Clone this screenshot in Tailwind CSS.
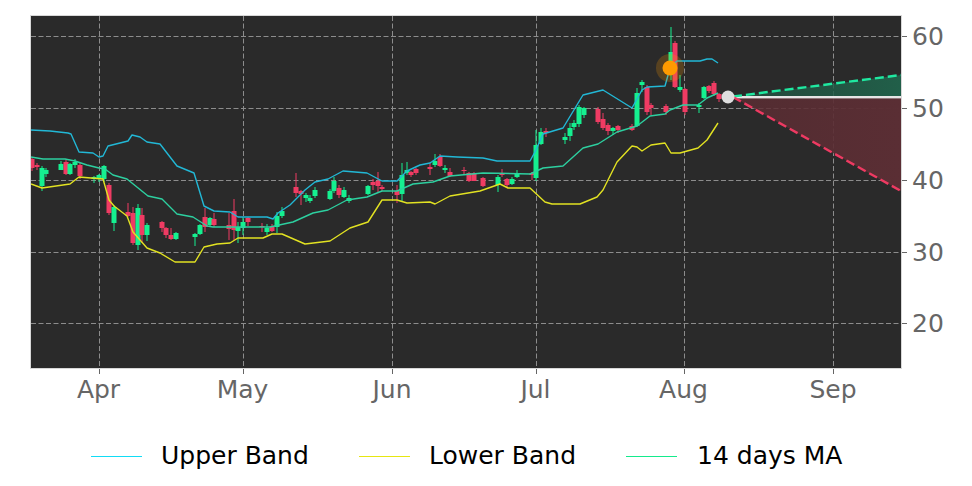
<!DOCTYPE html>
<html lang="en">
<head>
    <meta charset="UTF-8">
    <title>Bollinger Bands forecast</title>
    <script src="https://cdn.jsdelivr.net/npm/@tailwindcss/browser@4"></script>
</head>
<body class="bg-white">
    <div class="w-[972px] h-[486px] overflow-hidden font-['DejaVu_Sans',sans-serif]">
        <!-- Chart -->
        <svg id="chart" class="block w-[972px] h-[420px]" viewBox="0 0 972 420">
            <defs>
                <linearGradient id="upFill" x1="0" x2="1" y1="0" y2="0">
                    <stop offset="0" stop-color="#215a46" stop-opacity="0.6"/>
                    <stop offset="1" stop-color="#215f49"/>
                </linearGradient>
                <linearGradient id="downFill" x1="0" x2="1" y1="0" y2="0">
                    <stop offset="0" stop-color="#5c2d33" stop-opacity="0.8"/>
                    <stop offset="1" stop-color="#5a2e34"/>
                </linearGradient>
                <clipPath id="plot"><rect x="31" y="16" width="870" height="352"/></clipPath>
            </defs>

            <rect x="30.5" y="15.5" width="871" height="353" fill="#2a2a2a" stroke="#d8d8d8"/>

            <g id="grid" stroke="#8c8c8c" stroke-width="1" stroke-dasharray="5 2.5">
                <path d="M31 36.5H901M31 108.5H901M31 180.5H901M31 252.5H901M31 323.5H901"/>
                <path d="M99.5 16V368M243.5 16V368M392.5 16V368M536.5 16V368M684.5 16V368M833.5 16V368"/>
            </g>

            <g stroke="#666666" stroke-width="1">
                <path d="M99.5 369v5M243.5 369v5M392.5 369v5M536.5 369v5M684.5 369v5M833.5 369v5"/>
                <path d="M902 36.5h5M902 108.5h5M902 180.5h5M902 252.5h5M902 323.5h5"/>
            </g>

            <g clip-path="url(#plot)">
                <path d="M733 97L901 75V97Z" fill="url(#upFill)"/>
                <path d="M733 97H901V191Z" fill="url(#downFill)"/>
                <g id="candles"></g>

                <polyline fill="none" stroke="#22b8d6" stroke-width="1.4" stroke-linejoin="round" points="31,130 50,131 68,133 71,134 79,152 93,153 99,157 103,156 108,146 128,141 132,135 140,137 147,142 160,144 177,166 194,173 204,206 214,211 230,212 238,217 260,217 267,217 273,219 278,213 290,205 305,190 315,182 328,179 343,171 367,173 382,181 397,181 407,171 420,165 430,163 440,156 457,157 483,158 497,161 530,161 536,150 543,134 563,128 583,95 603,90 632,108 642,90 647,87 665,86 670,68 677,61 700,61 707,59 712,59 718,63"/>
                <polyline fill="none" stroke="#e2e222" stroke-width="1.4" stroke-linejoin="round" points="31,184 42,188 70,184 79,177 103,179 109,200 114,206 127,216 133,232 147,248 160,253 175,262 195,262 204,247 217,244 230,243 238,238 263,238 272,234 282,234 305,244 330,241 350,228 368,222 382,200 397,200 407,203 430,202 435,204 450,196 480,191 500,184 508,188 530,188 545,202 552,204 580,204 597,197 603,190 617,162 632,146 637,147 642,151 651,145 665,143 671,153 680,153 698,148 707,140 718,123"/>
                <polyline fill="none" stroke="#2dd0a0" stroke-width="1.4" stroke-linejoin="round" points="31,157 43,159 65,159 75,161 87,165 99,168 105,169 113,175 127,179 148,196 162,199 177,214 193,217 207,226 213,227 270,227 293,222 313,213 328,210 347,200 367,197 382,191 397,191 413,184 433,182 450,176 483,173 530,174 543,168 563,166 583,148 598,144 617,132 637,126 650,116 665,114 670,110 683,105 698,105 707,98 718,93"/>

                <rect x="733" y="96" width="168" height="2.4" fill="#e6e6e6"/>
                <path d="M733 96.5L901 75" fill="none" stroke="#1fe8a0" stroke-width="2.4" stroke-dasharray="9 4"/>
                <path d="M733 97L901 191" fill="none" stroke="#ee3a62" stroke-width="2.4" stroke-dasharray="9 4"/>

                <circle cx="670" cy="68" r="14" fill="#ff9900" fill-opacity="0.22"/>
                <circle cx="670" cy="68" r="7.5" fill="#ff9a00"/>
                <circle cx="728" cy="97" r="6.5" fill="#dedede"/>
            </g>

            <g class="fill-[#666666] text-[25px]" text-anchor="middle">
                <text x="98.5" y="398">Apr</text>
                <text x="242.5" y="398">May</text>
                <text x="392" y="398">Jun</text>
                <text x="535.5" y="398">Jul</text>
                <text x="683.5" y="398">Aug</text>
                <text x="833" y="398">Sep</text>
            </g>
            <g class="fill-[#666666] text-[25px]">
                <text x="912" y="45">60</text>
                <text x="912" y="117">50</text>
                <text x="912" y="189">40</text>
                <text x="912" y="261">30</text>
                <text x="912" y="332">20</text>
            </g>
        </svg>

        <!-- Legend -->
        <div class="flex items-center pl-[91px] pt-[21px] text-[25px] leading-[30px] text-black whitespace-nowrap">
            <span class="shrink-0 w-[51px] h-px bg-[#12dcf5]"></span>
            <span class="shrink-0 ml-[19px] w-[148px]">Upper Band</span>
            <span class="shrink-0 ml-[50px] w-[51px] h-px bg-[#e6e612]"></span>
            <span class="shrink-0 ml-[19px] w-[147px]">Lower Band</span>
            <span class="shrink-0 ml-[50px] w-[51px] h-px bg-[#14ea8c]"></span>
            <span class="shrink-0 ml-[20px]">14 days MA</span>
        </div>
    </div>

    <script>
        // x, wick top, wick bottom, body top, body bottom, g/r
        var candles = [
            [32,157,171,159,168,'r'],[37,163,170,165,167,'r'],[42,166,191,168,186,'g'],[46,168,177,170,174,'g'],
            [61,161,170,164,170,'g'],[66,160,175,162,174,'r'],[70,163,175,164,174,'g'],[75,159,168,162,165,'g'],
            [80,163,179,165,176,'r'],[94,176,183,177,179,'g'],[99,174,182,175,179,'g'],[104,165,182,166,179,'g'],
            [109,183,215,185,213,'r'],[114,205,231,207,223,'g'],[128,203,217,212,216,'r'],[133,207,245,213,243,'r'],
            [138,204,250,208,245,'g'],[142,208,243,215,235,'r'],[147,223,241,225,235,'g'],[162,221,232,222,228,'r'],
            [166,227,238,228,235,'r'],[171,228,240,235,239,'r'],[176,232,240,233,239,'g'],[195,233,246,234,237,'g'],
            [200,224,235,225,234,'g'],[205,208,232,217,227,'r'],[210,217,226,218,225,'g'],[214,213,227,219,225,'r'],
            [229,213,240,225,229,'r'],[234,199,240,211,230,'r'],[238,222,243,227,231,'g'],[243,217,235,222,228,'g'],
            [248,217,226,218,222,'r'],[262,223,232,226,227,'r'],[267,224,235,228,232,'g'],[272,224,232,227,231,'r'],
            [277,212,233,216,227,'g'],[282,207,218,211,216,'g'],[296,173,197,187,193,'r'],[301,190,205,191,194,'r'],
            [306,193,202,195,198,'g'],[310,195,203,198,201,'g'],[315,187,198,190,196,'g'],[330,189,200,191,199,'g'],
            [334,177,193,181,191,'g'],[339,185,198,188,195,'r'],[344,187,198,190,197,'g'],[349,195,203,198,201,'g'],
            [368,185,195,186,194,'g'],[373,179,190,182,185,'r'],[378,172,192,181,186,'r'],[382,185,191,187,189,'r'],
            [397,185,203,191,195,'r'],[402,163,202,175,194,'g'],[407,162,175,170,173,'g'],[411,171,177,172,175,'r'],
            [416,168,175,169,173,'r'],[430,163,175,167,169,'r'],[435,154,167,161,165,'g'],[440,154,167,157,166,'r'],
            [445,165,173,168,170,'g'],[450,168,177,172,176,'r'],[464,167,175,170,171,'r'],[469,172,182,173,181,'r'],
            [474,172,181,173,181,'r'],[483,177,187,178,186,'r'],[498,175,192,177,185,'g'],[502,169,177,173,175,'r'],
            [507,178,188,179,185,'r'],[512,177,185,179,184,'g'],[517,170,178,173,177,'g'],[532,172,180,173,175,'r'],
            [536,130,181,145,178,'g'],[541,128,145,132,144,'g'],[546,128,137,131,133,'r'],[565,133,144,137,140,'g'],
            [570,123,141,128,136,'g'],[574,120,130,123,127,'g'],[579,105,127,107,124,'g'],[584,107,118,108,115,'g'],
            [598,107,124,109,122,'r'],[603,113,130,119,128,'r'],[608,123,135,125,131,'r'],[613,127,135,128,131,'g'],
            [618,125,133,126,130,'r'],[632,124,131,126,130,'r'],[637,88,127,93,126,'g'],[642,80,92,82,85,'g'],
            [647,85,115,87,112,'r'],[651,103,115,105,108,'r'],[666,104,115,106,112,'r'],[671,27,80,52,68,'g'],
            [675,41,88,43,87,'r'],[680,75,92,87,90,'g'],[685,88,115,89,112,'r'],[699,103,113,105,107,'g'],
            [704,86,99,87,98,'g'],[709,85,93,86,91,'r'],[714,81,96,83,94,'r'],[719,93,102,94,99,'r']
        ];
        var colors = { g: '#15f090', r: '#ef3b63' };
        var html = '';
        candles.forEach(function (c) {
            var col = colors[c[5]];
            html += '<path d="M' + c[0] + ' ' + c[1] + 'V' + c[2] + '" stroke="' + col + '" stroke-width="1"/>';
            html += '<rect x="' + (c[0] - 2.5) + '" y="' + c[3] + '" width="5" height="' + (c[4] - c[3]) + '" fill="' + col + '"/>';
        });
        document.getElementById('candles').innerHTML = html;
    </script>
</body>
</html>
